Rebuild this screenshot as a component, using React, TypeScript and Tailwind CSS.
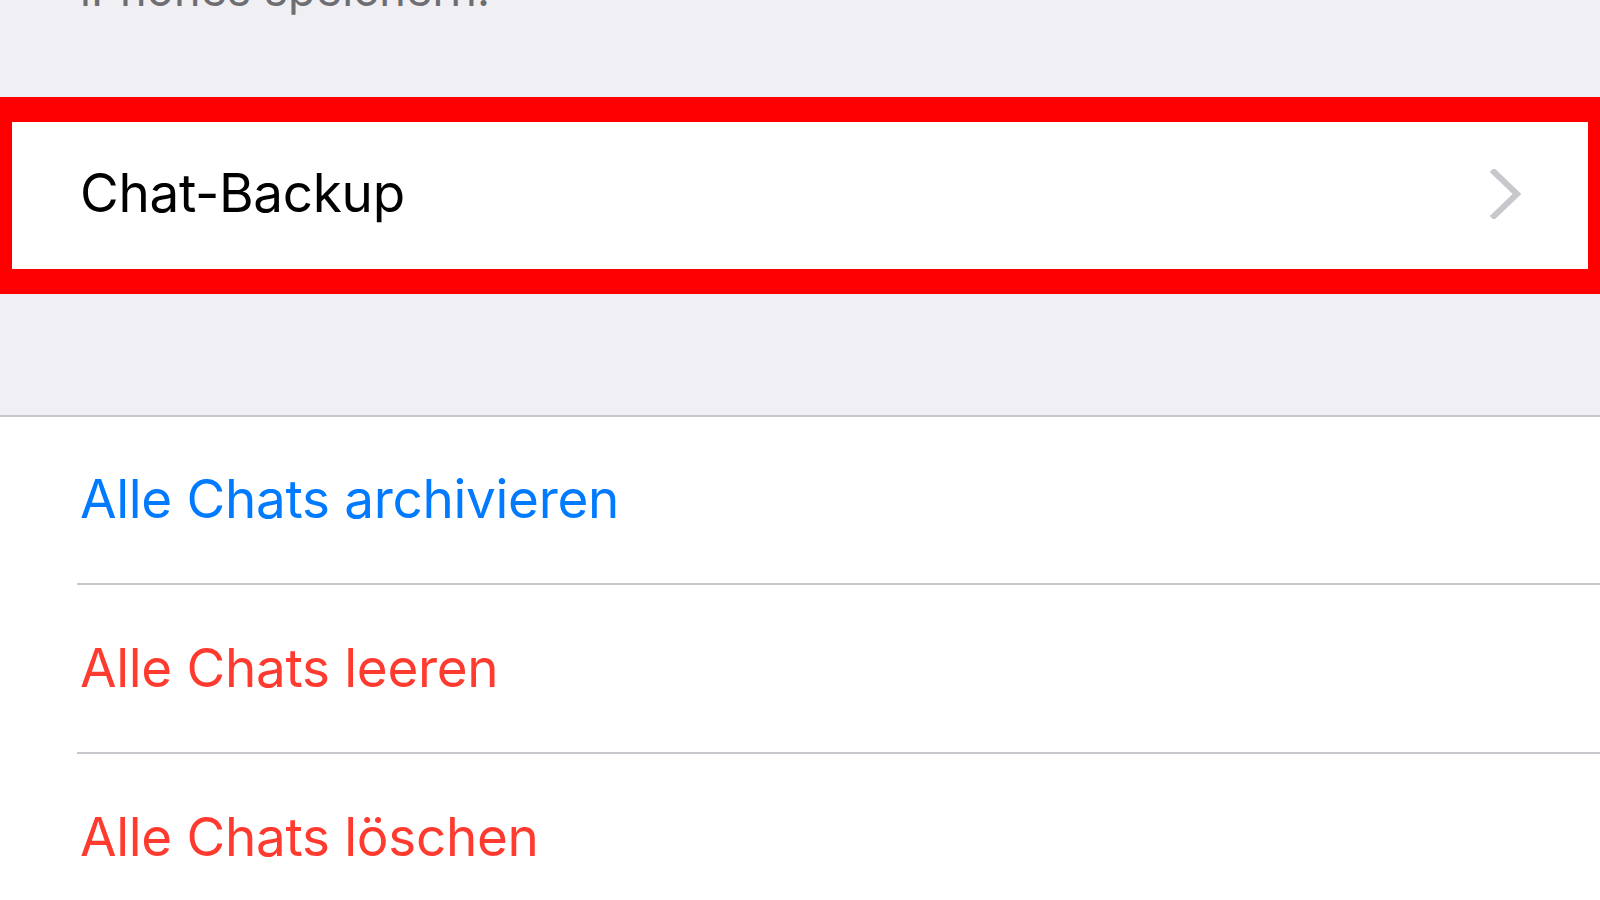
export default function App() {
  const font = { fontFamily: 'Inter, "Noto Sans", sans-serif' }
  return (
    <div className="w-[1600px] h-[900px] overflow-hidden bg-[#efeff4]" style={font}>
      {/* Footer text of previous section, cut off at top */}
      <div className="h-[97px] px-[80px] overflow-hidden">
        <p className="mt-[-35px] text-[45px] leading-[50px] text-[#6d6d72] tracking-[0.2px]">
          iPhones speichern.
        </p>
      </div>

      {/* Highlighted row */}
      <div className="border-x-[12px] border-t-[25px] border-b-[25px] border-[#ff0000] bg-white">
        <div className="h-[147px] flex items-center justify-between pl-[68px] pr-[66px]">
          <span className="mt-[-3px] text-[53px] text-black tracking-[-0.3px]">Chat-Backup</span>
          <svg width="32" height="50" viewBox="0 0 32 50" fill="none" className="mt-[-4px]">
            <path d="M4 3 L27 25 L4 47" stroke="#c7c7cc" strokeWidth="6" strokeLinecap="square" />
          </svg>
        </div>
      </div>

      <div className="h-[121px]" />

      {/* Actions */}
      <div className="border-t-2 border-[#c8c7cc] bg-white">
        <div className="h-[166px] flex items-center pl-[80px] text-[53px] text-[#007aff] tracking-[-0.3px]">
          Alle Chats archivieren
        </div>
        <div className="ml-[77px] h-[2px] bg-[#c8c7cc]" />
        <div className="h-[167px] flex items-center pl-[80px] text-[53px] text-[#ff3b30] tracking-[-0.3px]">
          Alle Chats leeren
        </div>
        <div className="ml-[77px] h-[2px] bg-[#c8c7cc]" />
        <div className="h-[168px] flex items-center pl-[80px] text-[53px] text-[#ff3b30] tracking-[-0.3px]">
          Alle Chats löschen
        </div>
      </div>
    </div>
  )
}
